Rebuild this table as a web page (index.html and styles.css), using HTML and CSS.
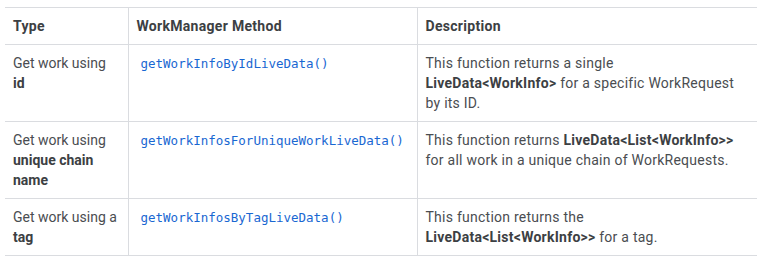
FILE: index.html
```html
<!DOCTYPE html>
<html lang="en">
<head>
    <meta charset="UTF-8">
    <meta name="viewport" content="width=device-width, initial-scale=1.0">
    <title>WorkManager LiveData</title>
    <link rel="stylesheet" href="styles.css">
</head>

<body>
    <table class="methods">
        <colgroup>
            <col class="col-type">
            <col class="col-method">
            <col class="col-desc">
        </colgroup>
        <thead>
            <tr>
                <th>Type</th>
                <th>WorkManager Method</th>
                <th>Description</th>
            </tr>
        </thead>
        <tbody>
            <tr>
                <td>Get work using <b>id</b></td>
                <td><a href="#"><code>getWorkInfoByIdLiveData()</code></a></td>
                <td class="desc">This function returns a single<br><b>LiveData&lt;WorkInfo&gt;</b> for a specific WorkRequest<br>by its ID.</td>
            </tr>
            <tr>
                <td>Get work using <b>unique chain name</b></td>
                <td><a href="#"><code>getWorkInfosForUniqueWorkLiveData()</code></a></td>
                <td class="desc">This function returns <b>LiveData&lt;List&lt;WorkInfo&gt;&gt;</b><br>for all work in a unique chain of WorkRequests.</td>
            </tr>
            <tr>
                <td>Get work using a <b>tag</b></td>
                <td><a href="#"><code>getWorkInfosByTagLiveData()</code></a></td>
                <td class="desc">This function returns the<br><b>LiveData&lt;List&lt;WorkInfo&gt;&gt;</b> for a tag.</td>
            </tr>
        </tbody>
    </table>
</body>
</html>
```

FILE: styles.css
```css
body {
    margin: 7px 7px 0 5px;
    background-color: #ffffff;
    font-family: 'Roboto', 'Noto Sans', sans-serif;
    font-size: 14px;
    color: #4a4d51;
}

.methods {
    width: 752px;
    border-collapse: collapse;
    table-layout: fixed;
}

.col-type {
    width: 123px;
}

.col-method {
    width: 289px;
}

.col-desc {
    width: 340px;
}

.methods th, .methods td {
    padding: 8px;
    line-height: 20px;
    text-align: left;
    vertical-align: top;
    border-top: 1px solid #dadce0;
    border-bottom: 1px solid #dadce0;
}

.methods th + th, .methods td + td {
    border-left: 1px solid #dadce0;
}

.methods th {
    font-weight: 700;
    color: #3c4043;
    letter-spacing: 0.3px;
}

.methods .desc {
    letter-spacing: 0.25px;
}

.methods b {
    font-weight: 700;
    color: #3c4043;
}

.methods a {
    text-decoration: none;
}

.methods code {
    padding: 0 4px;
    font-family: 'DejaVu Sans Mono', 'Liberation Mono', monospace;
    font-size: 12.5px;
    color: #1967d2;
}
```
